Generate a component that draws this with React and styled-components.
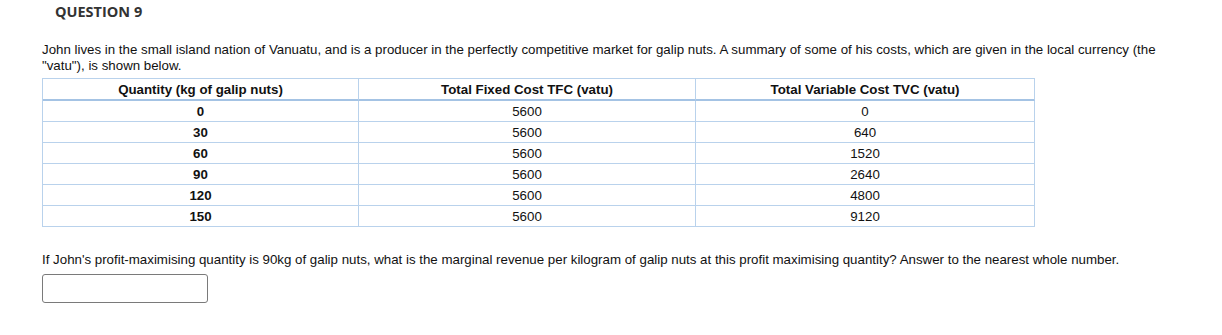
import React from 'react'
import styled, { createGlobalStyle } from 'styled-components';

const GlobalStyle = createGlobalStyle`
  body {
    margin: 0;
    background: #ffffff;
  }
`;

const PAGE = styled.div`
  width: 1222px;
  box-sizing: border-box;
  padding: 2px 42px 0 42px;
  font-family: "Liberation Sans", Arial, sans-serif;
  font-size: 13.3px;
  color: #111;
`;

const TITLE = styled.h3`
  margin: 0 0 0 13px;
  font-family: "Open Sans", "Liberation Sans", sans-serif;
  font-size: 14.5px;
  font-weight: 700;
  line-height: 20px;
  color: #333;
`;

const TEXT = styled.p`
  margin: ${p => p.$top}px 0 0 0;
  line-height: 16px;
`;

const GRID = styled.div`
  margin-top: 4px;
  display: grid;
  grid-template-columns: 316px 337px 339px;
  width: 993px;
  box-sizing: border-box;
  border-top: 1px solid #b9d2ec;
  border-left: 1px solid #b9d2ec;
`;

const CELL = styled.div`
  box-sizing: border-box;
  height: ${p => (p.$head ? 22 : 21)}px;
  padding-top: 2px;
  line-height: 18px;
  text-align: center;
  font-weight: ${p => (p.$bold ? 700 : 400)};
  border-right: 1px solid #b9d2ec;
  border-bottom: ${p => (p.$head ? '2px solid #a4c3e4' : '1px solid #b9d2ec')};
`;

const INPUT = styled.input`
  display: block;
  margin-top: 6px;
  width: 166px;
  height: 29px;
  box-sizing: border-box;
  border: 1px solid #7a7a7a;
  border-radius: 3px;
  outline: none;
  padding: 0 6px;
  font-family: "Liberation Sans", Arial, sans-serif;
  font-size: 13px;
`;

const rows = [
  ['0', '5600', '0'],
  ['30', '5600', '640'],
  ['60', '5600', '1520'],
  ['90', '5600', '2640'],
  ['120', '5600', '4800'],
  ['150', '5600', '9120'],
];

const App = () => {
  return (
    <PAGE>
      <GlobalStyle />
      <TITLE>QUESTION 9</TITLE>
      <TEXT $top={20}>
        John lives in the small island nation of Vanuatu, and is a producer in the perfectly competitive market for galip nuts. A summary of some of his costs, which are given in the local currency (the "vatu"), is shown below.
      </TEXT>
      <GRID>
        <CELL $head $bold>Quantity (kg of galip nuts)</CELL>
        <CELL $head $bold>Total Fixed Cost TFC (vatu)</CELL>
        <CELL $head $bold>Total Variable Cost TVC (vatu)</CELL>
        {rows.map((r) => (
          <React.Fragment key={r[0]}>
            <CELL $bold>{r[0]}</CELL>
            <CELL>{r[1]}</CELL>
            <CELL>{r[2]}</CELL>
          </React.Fragment>
        ))}
      </GRID>
      <TEXT $top={25}>
        If John's profit-maximising quantity is 90kg of galip nuts, what is the marginal revenue per kilogram of galip nuts at this profit maximising quantity? Answer to the nearest whole number.
      </TEXT>
      <INPUT type="text" />
    </PAGE>
  )
}

export default App
